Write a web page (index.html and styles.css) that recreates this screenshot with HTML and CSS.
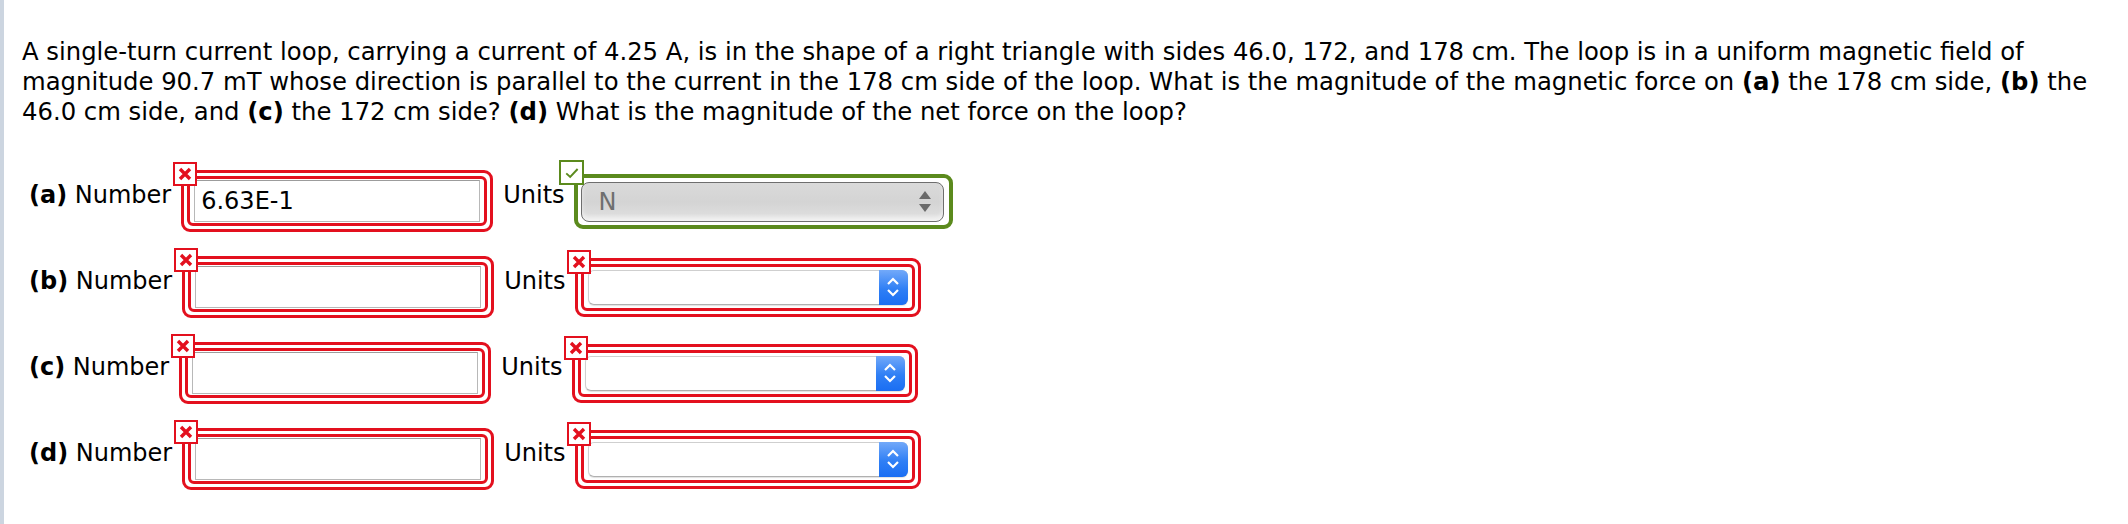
FILE: index.html
```html
<!DOCTYPE html>
<html>
<head>
<meta charset="utf-8">
<link rel="stylesheet" href="styles.css">
</head>
<body>
<div class="page">
  <p class="question">A single-turn current loop, carrying a current of 4.25 A, is in the shape of a right triangle with sides 46.0, 172, and 178 cm. The loop is in a uniform magnetic field of magnitude 90.7 mT whose direction is parallel to the current in the 178 cm side of the loop. What is the magnitude of the magnetic force on <b>(a)</b> the 178 cm side, <b>(b)</b> the 46.0 cm side, and <b>(c)</b> the 172 cm side? <b>(d)</b> What is the magnitude of the net force on the loop?</p>

  <div class="rows">
    <div class="row">
      <span class="label"><b>(a)</b> Number</span>
      <div class="field">
        <span class="mark wrong"><svg viewBox="0 0 20 20"><path d="M5 5L15 15M15 5L5 15"/></svg></span>
        <div class="ring"><div class="ring-in"><input class="num" type="text" value="6.63E-1" readonly></div></div>
      </div>
      <span class="label units">Units</span>
      <div class="field">
        <span class="mark right ok"><svg viewBox="0 0 24 24"><path d="M6 13L10.5 17L19 8"/></svg></span>
        <div class="green">
          <div class="sel-disabled"><span class="sel-text">N</span>
            <svg class="tri" viewBox="0 0 12 22"><path d="M6 0L12 8H0Z"/><path d="M0 13H12L6 21Z"/></svg>
          </div>
        </div>
      </div>
    </div>

    <div class="row">
      <span class="label"><b>(b)</b> Number</span>
      <div class="field">
        <span class="mark wrong"><svg viewBox="0 0 20 20"><path d="M5 5L15 15M15 5L5 15"/></svg></span>
        <div class="ring"><div class="ring-in"><input class="num" type="text" value="" readonly></div></div>
      </div>
      <span class="label units">Units</span>
      <div class="field">
        <span class="mark wrong"><svg viewBox="0 0 20 20"><path d="M5 5L15 15M15 5L5 15"/></svg></span>
        <div class="ring"><div class="ring-in sel-ring">
          <div class="sel"><span class="step"><svg viewBox="0 0 14 22"><path d="M2 8L7 3L12 8M2 14L7 19L12 14"/></svg></span></div>
        </div></div>
      </div>
    </div>

    <div class="row">
      <span class="label"><b>(c)</b> Number</span>
      <div class="field">
        <span class="mark wrong"><svg viewBox="0 0 20 20"><path d="M5 5L15 15M15 5L5 15"/></svg></span>
        <div class="ring"><div class="ring-in"><input class="num" type="text" value="" readonly></div></div>
      </div>
      <span class="label units">Units</span>
      <div class="field">
        <span class="mark wrong"><svg viewBox="0 0 20 20"><path d="M5 5L15 15M15 5L5 15"/></svg></span>
        <div class="ring"><div class="ring-in sel-ring">
          <div class="sel"><span class="step"><svg viewBox="0 0 14 22"><path d="M2 8L7 3L12 8M2 14L7 19L12 14"/></svg></span></div>
        </div></div>
      </div>
    </div>

    <div class="row">
      <span class="label"><b>(d)</b> Number</span>
      <div class="field">
        <span class="mark wrong"><svg viewBox="0 0 20 20"><path d="M5 5L15 15M15 5L5 15"/></svg></span>
        <div class="ring"><div class="ring-in"><input class="num" type="text" value="" readonly></div></div>
      </div>
      <span class="label units">Units</span>
      <div class="field">
        <span class="mark wrong"><svg viewBox="0 0 20 20"><path d="M5 5L15 15M15 5L5 15"/></svg></span>
        <div class="ring"><div class="ring-in sel-ring">
          <div class="sel"><span class="step"><svg viewBox="0 0 14 22"><path d="M2 8L7 3L12 8M2 14L7 19L12 14"/></svg></span></div>
        </div></div>
      </div>
    </div>
  </div>
</div>
</body>
</html>
```

FILE: styles.css
```css
html, body {
  margin: 0;
  padding: 0;
  background: #ffffff;
}

.page {
  border-left: 4px solid #ccd5e0;
  min-height: 524px;
  box-sizing: border-box;
  padding: 37px 30px 0 18px;
}

.question {
  margin: 0;
  max-width: 2080px;
  font-family: "DejaVu Sans", Verdana, sans-serif;
  font-size: 24.3px;
  line-height: 30px;
  color: #000;
}

.rows {
  margin-top: 43px;
  display: flex;
  flex-direction: column;
  gap: 24px;
  padding-left: 7px;
}

.row {
  display: flex;
  align-items: center;
  height: 62px;
}

.label {
  font-family: "DejaVu Sans", Verdana, sans-serif;
  font-size: 24px;
  line-height: 28px;
  color: #000;
  margin-right: 10px;
  margin-bottom: 12px;
  white-space: nowrap;
}

.label.units {
  margin-left: 10px;
  margin-right: 9px;
}

.field {
  position: relative;
}

.mark {
  position: absolute;
  left: -8px;
  top: -8px;
  width: 24px;
  height: 24px;
  box-sizing: border-box;
  background: #fff;
  z-index: 2;
}

.mark svg {
  display: block;
  width: 20px;
  height: 20px;
  fill: none;
}

.mark.wrong {
  border: 2px solid #e3101e;
}

.mark.wrong svg path {
  stroke: #e3101e;
  stroke-width: 3.4;
  stroke-linecap: butt;
}

.mark.ok {
  border: 2px solid #5b8a1d;
  left: -15px;
  top: -14px;
  width: 25px;
  height: 25px;
}

.mark.ok svg {
  width: 21px;
  height: 21px;
}

.mark.ok svg path {
  stroke: #5b8a1d;
  stroke-width: 2.2;
}

.ring {
  border: 3px solid #e3101e;
  border-radius: 9px;
  padding: 3px;
}

.ring-in {
  border: 3px solid #e3101e;
  border-radius: 6px;
  padding: 1px 4px;
}

.ring-in.sel-ring {
  padding: 3px 4px;
}

.num {
  display: block;
  box-sizing: border-box;
  width: 286px;
  height: 42px;
  margin: 0;
  border: 1px solid #b8b8b8;
  border-top-color: #9c9c9c;
  padding: 0 6px;
  font-family: "DejaVu Sans", Verdana, sans-serif;
  font-size: 24px;
  color: #000;
  background: #fff;
  outline: none;
}

.sel {
  position: relative;
  box-sizing: border-box;
  width: 320px;
  height: 35px;
  background: #fff;
  border: 1px solid #cfcfcf;
  border-bottom-color: #b0b0b0;
  border-radius: 6px;
  box-shadow: 0 1px 1px rgba(0,0,0,0.12);
}

.step {
  position: absolute;
  right: -1px;
  top: -1px;
  bottom: -1px;
  width: 29px;
  border-radius: 0 6px 6px 0;
  background: linear-gradient(#72a9f9, #2f7ff5 55%, #1a6ef3);
  display: flex;
  align-items: center;
  justify-content: center;
}

.step svg {
  width: 14px;
  height: 22px;
  fill: none;
  stroke: #fff;
  stroke-width: 2.2;
}

.green {
  border: 4px solid #5b8a1d;
  border-radius: 9px;
  padding: 4px 5px 3px 3px;
}

.sel-disabled {
  box-sizing: border-box;
  width: 363px;
  height: 40px;
  border: 1.5px solid #6e6e6e;
  border-radius: 8px;
  background: linear-gradient(#dadada, #d4d4d4 50%, #dcdcdc 80%, #e6e6e6);
  box-shadow: inset 0 -4px 4px rgba(255,255,255,0.5);
  display: flex;
  align-items: center;
  justify-content: space-between;
  padding: 0 12px 0 17px;
}

.sel-text {
  font-family: "DejaVu Sans", Verdana, sans-serif;
  font-size: 24px;
  color: #6f6f6f;
}

.tri {
  width: 12px;
  height: 22px;
  fill: #6a6a6a;
}
```
